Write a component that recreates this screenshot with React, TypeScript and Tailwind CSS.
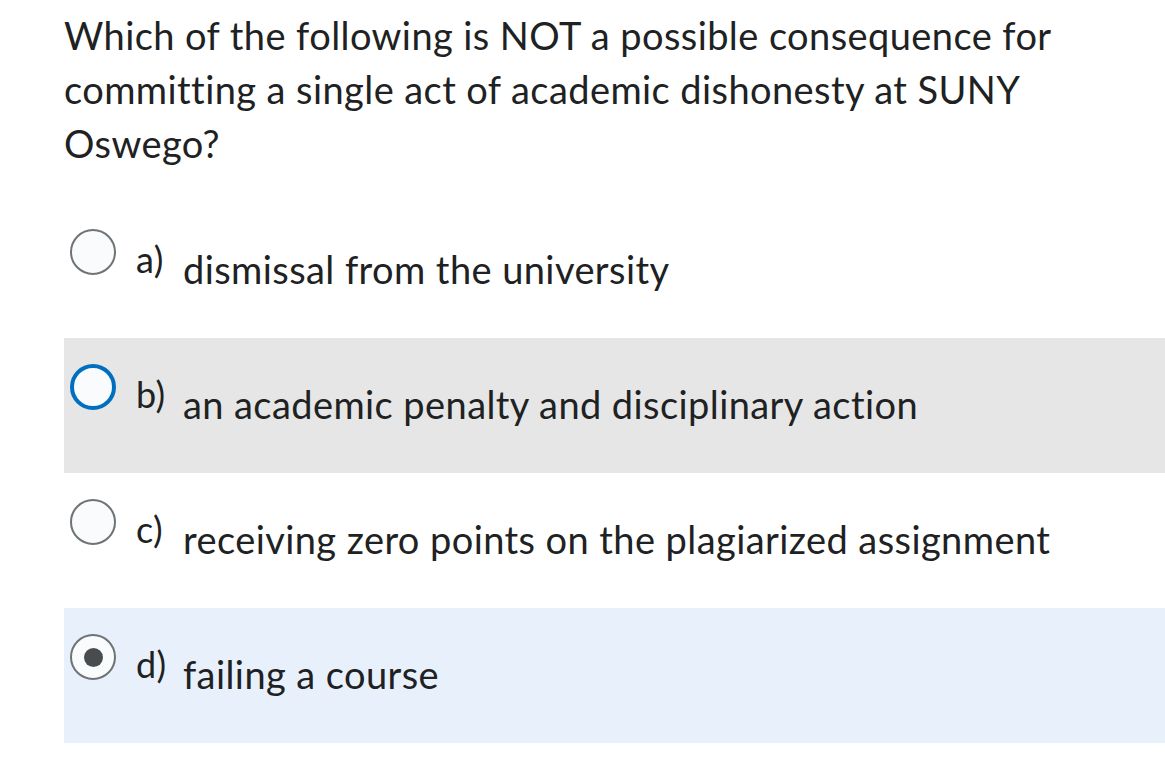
const options = [
  { key: 'a', text: 'dismissal from the university', state: 'none' },
  { key: 'b', text: 'an academic penalty and disciplinary action', state: 'focus' },
  { key: 'c', text: 'receiving zero points on the plagiarized assignment', state: 'none' },
  { key: 'd', text: 'failing a course', state: 'checked' },
] as const

function Radio({ state }: { state: 'none' | 'focus' | 'checked' }) {
  if (state === 'focus') {
    return (
      <div className="mt-[26px] ml-[6px] h-[46px] w-[46px] shrink-0 rounded-full border-[4px] border-[#006fbf] bg-[#f9fbfc]" />
    )
  }
  return (
    <div className="mt-[26px] ml-[6px] flex h-[46px] w-[46px] shrink-0 items-center justify-center rounded-full border-2 border-[#6e7376] bg-[#f9fbfc]">
      {state === 'checked' && <div className="h-[19px] w-[19px] rounded-full bg-[#494c4e]" />}
    </div>
  )
}

export default function App() {
  return (
    <div className="min-h-screen bg-white font-['Lato',sans-serif] tracking-[0.026em] text-[#202122]">
      <div className="pl-[64px]">
        <p className="pt-[8px] pr-[60px] text-[38px] leading-[54px]">
          Which of the following is NOT a possible consequence for committing a single act of academic dishonesty at
          SUNY Oswego?
        </p>
        <div className="mt-[33px]">
          {options.map((o) => (
            <div
              key={o.key}
              className={
                'flex h-[135px] items-start ' +
                (o.state === 'focus' ? 'bg-[#e6e6e6]' : o.state === 'checked' ? 'bg-[#e8f1fb]' : 'bg-white')
              }
            >
              <Radio state={o.state} />
              <span className="ml-[20px] mt-[38px] w-[47px] shrink-0 text-[36px] leading-[36px]">{o.key})</span>
              <span className="mt-[47px] text-[38px] leading-[38px]">{o.text}</span>
            </div>
          ))}
        </div>
      </div>
    </div>
  )
}
